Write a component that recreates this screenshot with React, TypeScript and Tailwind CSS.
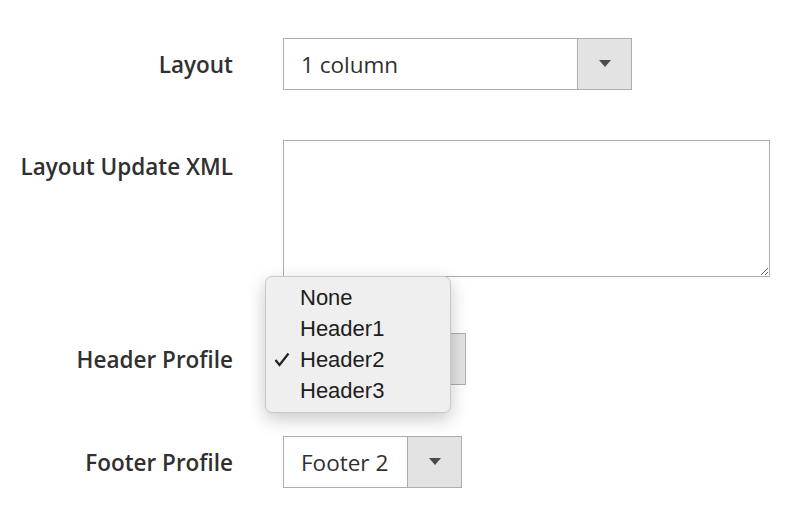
import React from 'react';

const labelCls =
  "w-[233px] shrink-0 text-right text-[22.5px] font-semibold text-[#303030] pt-[2px]";

function SelectBox({ value, width, arrowWidth = 54 }: { value: string; width: number; arrowWidth?: number }) {
  return (
    <div
      className="flex h-[52px] border border-[#adadad] bg-white"
      style={{ width }}
    >
      <div className="flex flex-1 items-center pl-[17px] pt-[2px] text-[22.5px] text-[#303030]">{value}</div>
      <div
        className="flex items-center justify-center border-l border-[#adadad] bg-[#e3e3e3]"
        style={{ width: arrowWidth }}
      >
        <svg width="12" height="8" viewBox="0 0 12 8">
          <path d="M0 0 H12 L6 7 Z" fill="#514943" />
        </svg>
      </div>
    </div>
  );
}

export default function App() {
  return (
    <div
      className="w-[800px] h-[520px] bg-white overflow-hidden"
      style={{ fontFamily: '"Open Sans", "Liberation Sans", sans-serif' }}
    >
      <div className="flex flex-col pt-[38px]">
        {/* Layout */}
        <div className="flex items-center gap-[50px]">
          <div className={labelCls}>Layout</div>
          <SelectBox value="1 column" width={349} />
        </div>

        {/* Layout Update XML */}
        <div className="mt-[50px] flex items-start gap-[50px]">
          <div className={labelCls + " pt-[10px]"}>Layout Update XML</div>
          <textarea className="h-[137px] w-[487px] border border-[#adadad] bg-white outline-none" />
        </div>

        {/* Header Profile */}
        <div className="relative mt-[56px] flex items-center gap-[50px]">
          <div className={labelCls}>Header Profile</div>
          <SelectBox value="Header 2" width={183} />
          <div
            className="absolute left-[265px] top-[-57px] w-[186px] h-[137px] rounded-[7px] border border-[#c8c8c8] bg-[#efefef] pt-[5px] shadow-[0_6px_18px_rgba(0,0,0,0.22)]"
            style={{ fontFamily: '"Liberation Sans", Arial, sans-serif' }}
          >
            {['None', 'Header1', 'Header2', 'Header3'].map((o) => (
              <div key={o} className="relative flex h-[31px] items-center pl-[34px] text-[22px] text-[#1d1d1d]">
                {o === 'Header2' && (
                  <svg className="absolute left-[8px] top-[8px]" width="16" height="15" viewBox="0 0 16 15">
                    <path d="M1.5 8 L5.5 13 L14.5 1.5" fill="none" stroke="#222" strokeWidth="2.2" />
                  </svg>
                )}
                {o}
              </div>
            ))}
          </div>
        </div>

        {/* Footer Profile */}
        <div className="mt-[51px] flex items-center gap-[50px]">
          <div className={labelCls}>Footer Profile</div>
          <SelectBox value="Footer 2" width={179} />
        </div>
      </div>
    </div>
  );
}
